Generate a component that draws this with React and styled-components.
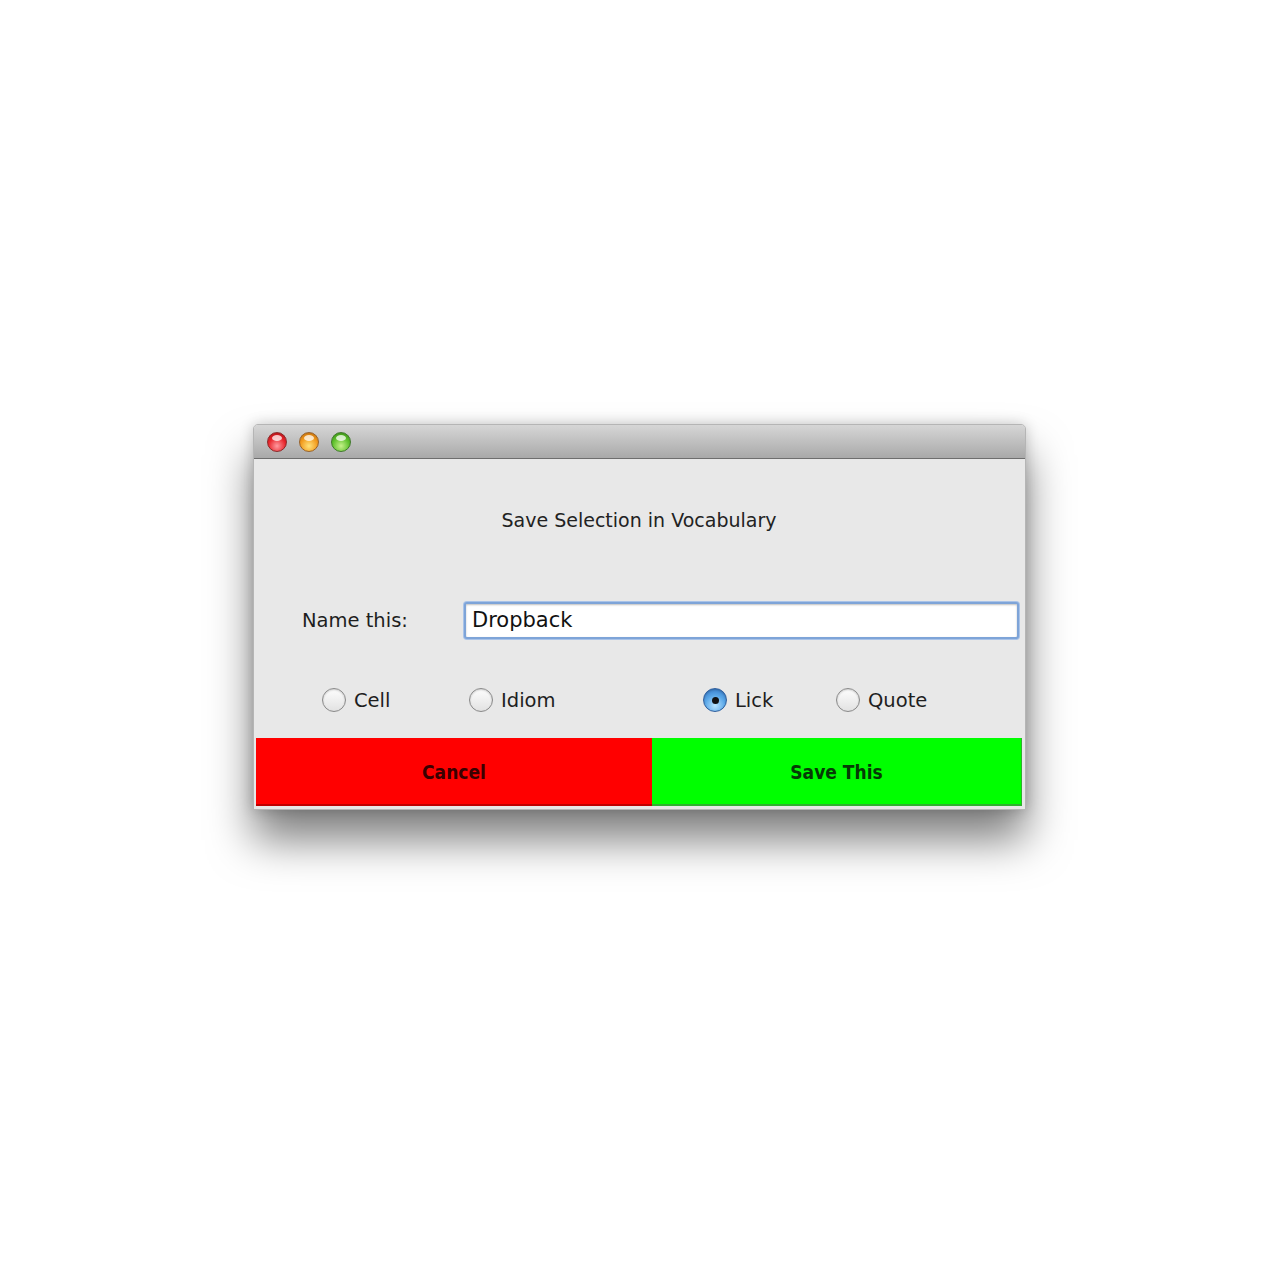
import React, { useState } from "react";
import styled, { createGlobalStyle } from "styled-components";

const GlobalStyle = createGlobalStyle`
  html, body {
    margin: 0;
    padding: 0;
    background: #ffffff;
  }
  body {
    font-family: "DejaVu Sans", "Liberation Sans", sans-serif;
  }
`;

const Page = styled.div`
  width: 1280px;
  height: 1280px;
  display: flex;
  align-items: flex-start;
  justify-content: flex-start;
  padding: 424px 0 0 253px;
  box-sizing: border-box;
`;

const Window = styled.div`
  width: 773px;
  height: 386px;
  display: flex;
  flex-direction: column;
  background: #e8e8e8;
  border: 1px solid #b5b5b5;
  border-radius: 5px 5px 0 0;
  box-sizing: border-box;
  box-shadow: 0 30px 44px rgba(0, 0, 0, 0.5), 0 0 14px rgba(0, 0, 0, 0.2);
  overflow: hidden;
`;

const TitleBar = styled.div`
  height: 33px;
  flex-shrink: 0;
  display: flex;
  align-items: center;
  gap: 12px;
  padding-left: 13px;
  background: linear-gradient(#d6d6d6, #a9a9a9);
  border-bottom: 1px solid #6e6e6e;
`;

const Light = styled.div`
  width: 20px;
  height: 20px;
  border-radius: 50%;
  box-sizing: border-box;
  border: 1px solid ${(p) => p.$edge};
  background: radial-gradient(circle at 50% 72%, ${(p) => p.$glow} 0%, ${(p) => p.$base} 55%, ${(p) => p.$dark} 100%);
  position: relative;
  &::after {
    content: "";
    position: absolute;
    left: 4px;
    top: 2px;
    width: 10px;
    height: 6px;
    border-radius: 50%;
    background: rgba(255, 255, 255, 0.75);
  }
`;

const Body = styled.div`
  flex: 1;
  display: flex;
  flex-direction: column;
  padding: 0 3px 3px 2px;
`;

const Heading = styled.div`
  height: 135px;
  flex-shrink: 0;
  display: flex;
  justify-content: center;
  padding-top: 50px;
  box-sizing: border-box;
  font-size: 19px;
  color: #222;
`;

const NameRow = styled.div`
  height: 52px;
  flex-shrink: 0;
  display: grid;
  grid-template-columns: 162px 1fr;
  align-items: center;
  padding-left: 46px;
  padding-right: 3px;
`;

const Label = styled.label`
  font-size: 19.5px;
  color: #1e1e1e;
`;

const TextInput = styled.input`
  height: 37px;
  box-sizing: border-box;
  width: 100%;
  border: 2px solid #7ea4d8;
  border-radius: 3px;
  box-shadow: 0 0 0 1px #a9c3e8, inset 0 1px 2px rgba(0, 0, 0, 0.25);
  background: #ffffff;
  padding: 0 6px;
  font-family: "DejaVu Sans", "Liberation Sans", sans-serif;
  font-size: 21px;
  color: #111;
  outline: none;
`;

const RadioRow = styled.div`
  height: 92px;
  flex-shrink: 0;
  display: grid;
  grid-template-columns: 147px 234px 133px auto;
  align-items: center;
  padding-left: 66px;
  padding-top: 16px;
  box-sizing: border-box;
`;

const RadioItem = styled.label`
  display: flex;
  align-items: center;
  gap: 8px;
  font-size: 19.5px;
  color: #1e1e1e;
  cursor: pointer;
`;

const RadioDot = styled.span`
  width: 24px;
  height: 24px;
  border-radius: 50%;
  box-sizing: border-box;
  display: flex;
  align-items: center;
  justify-content: center;
  border: 1px solid ${(p) => (p.$on ? "#2f5f9e" : "#8a8a8a")};
  background: ${(p) =>
    p.$on
      ? "radial-gradient(circle at 50% 75%, #b9e4ff 0%, #5aa7e8 50%, #2d6fc0 100%)"
      : "linear-gradient(#fdfdfd, #e2e2e2)"};
  box-shadow: inset 0 1px 2px rgba(0, 0, 0, 0.2);
  &::after {
    content: "";
    width: 7px;
    height: 7px;
    border-radius: 50%;
    background: #111;
    display: ${(p) => (p.$on ? "block" : "none")};
  }
`;

const ButtonRow = styled.div`
  height: 68px;
  flex-shrink: 0;
  display: grid;
  grid-template-columns: 396px 1fr;
`;

const BigButton = styled.button`
  border: none;
  margin: 0;
  background: ${(p) => p.$color};
  border-bottom: 2px solid ${(p) => p.$shade};
  border-right: ${(p) => (p.$last ? `1px solid ${p.$shade}` : "none")};
  font-family: "DejaVu Sans Condensed", "DejaVu Sans", "Liberation Sans", sans-serif;
  font-stretch: condensed;
  font-weight: bold;
  font-size: 19px;
  color: ${(p) => p.$ink};
  cursor: pointer;
  padding: 2px 0 0;
`;

const kinds = ["Cell", "Idiom", "Lick", "Quote"];

export default function App() {
  const [name, setName] = useState("Dropback");
  const [kind, setKind] = useState("Lick");

  return (
    <>
      <GlobalStyle />
      <Page>
        <Window>
          <TitleBar>
            <Light $base="#e8252b" $glow="#ff9aa0" $dark="#9c0b10" $edge="#8c2a2a" />
            <Light $base="#f29a1c" $glow="#ffe27a" $dark="#b05e06" $edge="#98622a" />
            <Light $base="#5cbf2a" $glow="#c6f28a" $dark="#2f7d10" $edge="#3f7a2a" />
          </TitleBar>
          <Body>
            <Heading>Save Selection in Vocabulary</Heading>
            <NameRow>
              <Label htmlFor="vocab-name">Name this:</Label>
              <TextInput
                id="vocab-name"
                value={name}
                onChange={(e) => setName(e.target.value)}
              />
            </NameRow>
            <RadioRow>
              {kinds.map((k) => (
                <RadioItem key={k} onClick={() => setKind(k)}>
                  <RadioDot $on={kind === k} />
                  {k}
                </RadioItem>
              ))}
            </RadioRow>
            <ButtonRow>
              <BigButton $color="#ff0000" $shade="#c00000" $ink="#3a0000">
                Cancel
              </BigButton>
              <BigButton $color="#00ff00" $shade="#2fb02f" $ink="#063a06" $last>
                Save This
              </BigButton>
            </ButtonRow>
          </Body>
        </Window>
      </Page>
    </>
  );
}
